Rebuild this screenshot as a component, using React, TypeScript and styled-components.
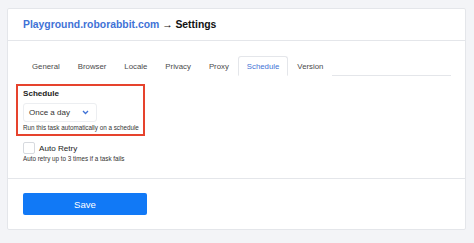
import React, { useState } from "react";
import styled, { createGlobalStyle } from "styled-components";

const BLUE = "#3f72d6";
const BORDER = "#e4e6ea";

const GlobalStyle = createGlobalStyle`
  body {
    margin: 0;
    background: #f3f4f7;
    font-family: "Liberation Sans", Arial, sans-serif;
    color: #222;
  }
`;

const Page = styled.div`
  padding: 8px 8px 10px 7px;
`;

const Card = styled.div`
  background: #fff;
  border: 1px solid ${BORDER};
  border-radius: 2px;
`;

const Header = styled.div`
  height: 31px;
  display: flex;
  align-items: center;
  padding: 0 15px;
  border-bottom: 1px solid ${BORDER};
`;

const Title = styled.h1`
  margin: 0;
  font-size: 10.4px;
  font-weight: 700;
  color: #111;

  span {
    color: ${BLUE};
  }
`;

const Body = styled.div`
  padding: 15px 14px 15px 15px;
  border-bottom: 1px solid ${BORDER};
`;

const Tabs = styled.ul`
  display: flex;
  margin: 0;
  padding: 0;
  list-style: none;
  border-bottom: 1px solid ${BORDER};
`;

const Tab = styled.li<{ $active?: boolean }>`
  height: 20px;
  box-sizing: border-box;
  display: flex;
  align-items: center;
  padding: 0 8px;
  margin-bottom: -1px;
  font-size: 7.8px;
  color: ${(p) => (p.$active ? BLUE : "#4a4a4a")};
  background: #fff;
  border: 1px solid ${(p) => (p.$active ? BORDER : "transparent")};
  border-bottom-color: ${(p) => (p.$active ? "#fff" : "transparent")};
  border-radius: 3px 3px 0 0;
`;

const Highlight = styled.div`
  width: 129px;
  box-sizing: border-box;
  margin: 8px 0 0 -7px;
  padding: 3px 3px 2px 5px;
  border: 2px solid #e6432d;
`;

const Label = styled.div`
  font-size: 8.1px;
  line-height: 10px;
  font-weight: 700;
  color: #222;
`;

const Select = styled.div`
  width: 74px;
  height: 19px;
  margin-top: 4px;
  box-sizing: border-box;
  display: flex;
  align-items: center;
  justify-content: space-between;
  padding: 0 7px 0 5px;
  border: 1px solid #eceef1;
  border-radius: 3px;
  font-size: 8px;
  color: #333;
`;

const Help = styled.div<{ $gap?: number }>`
  margin-top: ${(p) => p.$gap ?? 2}px;
  font-size: 6.3px;
  line-height: 8px;
  color: #333;
  white-space: nowrap;
`;

const CheckRow = styled.label`
  display: flex;
  align-items: center;
  gap: 4px;
  height: 12px;
  margin-top: 6px;
  font-size: 8.1px;
  color: #222;
`;

const Box = styled.span<{ $on: boolean }>`
  width: 12px;
  height: 12px;
  box-sizing: border-box;
  border: 1px solid #d7dadf;
  border-radius: 2px;
  background: ${(p) => (p.$on ? BLUE : "#fff")};
`;

const Footer = styled.div`
  padding: 14px 15px;
`;

const SaveButton = styled.button`
  display: block;
  width: 124px;
  height: 22px;
  border: none;
  border-radius: 2px;
  background: #1179f6;
  color: #fff;
  font-family: inherit;
  font-size: 9.6px;
`;

const Chevron = () => (
  <svg width="7" height="5" viewBox="0 0 7 5">
    <path d="M1 1l2.5 2.5L6 1" fill="none" stroke={BLUE} strokeWidth="1.3" />
  </svg>
);

const tabs = ["General", "Browser", "Locale", "Privacy", "Proxy", "Schedule", "Version"];

const App: React.FC = () => {
  const [retry, setRetry] = useState(false);
  return (
    <Page>
      <GlobalStyle />
      <Card>
        <Header>
          <Title>
            <span>Playground.roborabbit.com</span> → Settings
          </Title>
        </Header>
        <Body>
          <Tabs>
            {tabs.map((t) => (
              <Tab key={t} $active={t === "Schedule"}>
                {t}
              </Tab>
            ))}
          </Tabs>
          <Highlight>
            <Label>Schedule</Label>
            <Select>
              Once a day
              <Chevron />
            </Select>
            <Help>Run this task automatically on a schedule</Help>
          </Highlight>
          <CheckRow onClick={() => setRetry(!retry)}>
            <Box $on={retry} />
            Auto Retry
          </CheckRow>
          <Help $gap={1}>Auto retry up to 3 times if a task fails</Help>
        </Body>
        <Footer>
          <SaveButton>Save</SaveButton>
        </Footer>
      </Card>
    </Page>
  );
};

export default App;
